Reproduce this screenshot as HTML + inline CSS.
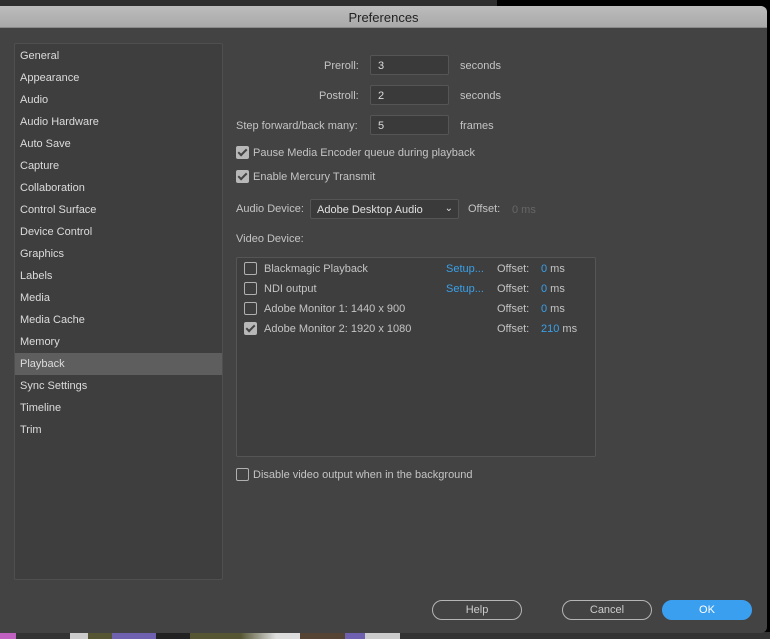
<!DOCTYPE html>
<html><head><style>
*{box-sizing:border-box;margin:0;padding:0}
body{width:770px;height:639px;background:#000;position:relative;overflow:hidden;font-family:"Liberation Sans",sans-serif;font-size:11px;color:#c4c4c4}
.topl{position:absolute;left:0;top:0;width:497px;height:8px;background:#2e2e2e}
.bot{position:absolute;left:0;top:632px;width:770px;height:7px;background:linear-gradient(90deg,#c060c0 0 16px,#333 16px 70px,#ccc 70px 88px,#553 88px 112px,#7060b0 112px 156px,#222 156px 190px,#553 190px 240px,#ddd 276px 300px,#543 300px 345px,#7060b0 345px 365px,#ccc 365px 400px,#333 400px)}
.dlg{position:absolute;left:0;top:6px;width:767px;height:627px;background:#434343;border-radius:0 6px 6px 0}
.title{height:22px;background:linear-gradient(#bcbcbc,#a9a9a9);border-bottom:1px solid #8a8a8a;text-align:center;font-size:13px;color:#222;line-height:23px;border-radius:0 6px 0 0}
.side{position:absolute;left:14px;top:37px;width:209px;height:537px;background:#3e3e3e;border:1px solid #4f4f4f;border-radius:2px;padding-top:1px}
.side div{height:22px;line-height:22px;padding-left:5px;color:#dcdcdc}
.side .sel{background:#5e5e5e}
.a{position:absolute;white-space:nowrap;margin-top:1px}
.in{position:absolute;width:79px;height:20px;background:#3a3a3a;border:1px solid #555;border-radius:2px;padding-left:7px;line-height:20px;color:#ddd}
.cb{position:absolute;width:13px;height:13px;border-radius:2px}
.cb.on{background:#b8b8b8}
.cb.on:after{content:"";position:absolute;left:4px;top:1px;width:3px;height:7px;border:solid #444;border-width:0 2px 2px 0;transform:rotate(45deg)}
.cb.off{border:1.5px solid #b0b0b0}
.blue{color:#3aa0e8}
.btn{position:absolute;top:600px;width:90px;height:20px;border:1.5px solid #b5b5b5;border-radius:10px;display:flex;align-items:center;justify-content:center;color:#ccc}
</style></head><body>
<div class="topl"></div>
<div class="bot"></div>
<div class="dlg">
<div class="title">Preferences</div>
<div class="side">
<div>General</div><div>Appearance</div><div>Audio</div><div>Audio Hardware</div><div>Auto Save</div><div>Capture</div><div>Collaboration</div><div>Control Surface</div><div>Device Control</div><div>Graphics</div><div>Labels</div><div>Media</div><div>Media Cache</div><div>Memory</div><div class="sel">Playback</div><div>Sync Settings</div><div>Timeline</div><div>Trim</div>
</div>
</div>
<div class="a" style="left:324px;top:59px">Preroll:</div>
<div class="in" style="left:370px;top:55px">3</div>
<div class="a" style="left:460px;top:59px">seconds</div>
<div class="a" style="left:319px;top:89px">Postroll:</div>
<div class="in" style="left:370px;top:85px">2</div>
<div class="a" style="left:460px;top:89px">seconds</div>
<div class="a" style="left:236px;top:119px">Step forward/back many:</div>
<div class="in" style="left:370px;top:115px">5</div>
<div class="a" style="left:460px;top:119px">frames</div>
<div class="cb on" style="left:236px;top:146px"></div>
<div class="a" style="left:253px;top:146px">Pause Media Encoder queue during playback</div>
<div class="cb on" style="left:236px;top:170px"></div>
<div class="a" style="left:253px;top:170px">Enable Mercury Transmit</div>
<div class="a" style="left:236px;top:202px">Audio Device:</div>
<div class="in" style="left:310px;top:199px;width:149px;height:20px;color:#e0e0e0;padding-left:6px">Adobe Desktop Audio<span style="position:absolute;right:5px;top:-1px;font-size:10px">&#8964;</span></div>
<div class="a" style="left:468px;top:202px">Offset:</div>
<div class="a" style="left:512px;top:203px;color:#666">0 ms</div>
<div class="a" style="left:236px;top:232px">Video Device:</div>
<div style="position:absolute;left:236px;top:257px;width:360px;height:200px;background:#3e3e3e;border:1px solid #555;border-radius:2px"></div>
<div class="cb off" style="left:244px;top:262px"></div><div class="a" style="left:264px;top:262px">Blackmagic Playback</div><div class="a blue" style="left:446px;top:262px">Setup...</div><div class="a" style="left:497px;top:262px">Offset:</div><div class="a" style="left:541px;top:262px"><span class="blue">0</span> ms</div>
<div class="cb off" style="left:244px;top:282px"></div><div class="a" style="left:264px;top:282px">NDI output</div><div class="a blue" style="left:446px;top:282px">Setup...</div><div class="a" style="left:497px;top:282px">Offset:</div><div class="a" style="left:541px;top:282px"><span class="blue">0</span> ms</div>
<div class="cb off" style="left:244px;top:302px"></div><div class="a" style="left:264px;top:302px">Adobe Monitor 1: 1440 x 900</div><div class="a" style="left:497px;top:302px">Offset:</div><div class="a" style="left:541px;top:302px"><span class="blue">0</span> ms</div>
<div class="cb on" style="left:244px;top:322px"></div><div class="a" style="left:264px;top:322px">Adobe Monitor 2: 1920 x 1080</div><div class="a" style="left:497px;top:322px">Offset:</div><div class="a" style="left:541px;top:322px"><span class="blue">210</span> ms</div>
<div class="cb off" style="left:236px;top:468px"></div>
<div class="a" style="left:253px;top:468px">Disable video output when in the background</div>
<div class="btn" style="left:432px">Help</div>
<div class="btn" style="left:562px">Cancel</div>
<div class="btn" style="left:662px;border-color:#3b9ff0;background:#3b9ff0;color:#fff">OK</div>
</body></html>
